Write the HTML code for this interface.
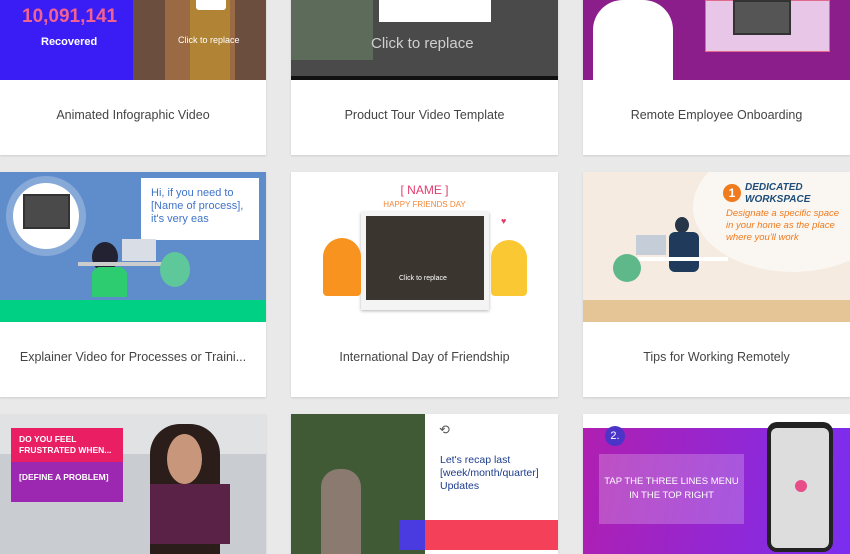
<!DOCTYPE html>
<html><head><meta charset="utf-8"><style>
*{margin:0;padding:0;box-sizing:border-box}
body{width:850px;height:531px;overflow:hidden;background:#e9e9e9;font-family:"Liberation Sans",sans-serif;position:relative}
.card{position:absolute;background:#fff;box-shadow:0 1px 2px rgba(0,0,0,.12);overflow:hidden}
.th{position:absolute;left:0;top:0;width:100%;overflow:hidden}
.cap{position:absolute;left:0;width:100%;text-align:center;font-size:12.5px;color:#444}
.a{position:absolute}
</style></head><body>
<div class="card" style="left:0;top:-70px;width:266px;height:225px">
 <div class="th" style="height:150px;background:#3a1cf4">
  <div class="a" style="left:133px;top:0;width:133px;height:150px;background:#6b4e3e"></div>
  <div class="a" style="left:165px;top:0;width:70px;height:150px;background:#9a6a44"></div>
  <div class="a" style="left:190px;top:70px;width:40px;height:80px;background:#b08434"></div>
  <div class="a" style="left:196px;top:62px;width:30px;height:18px;background:#fff;border-radius:3px"></div>
  <div class="a" style="left:178px;top:105px;color:#fff;font-size:9px">Click to replace</div>
  <div class="a" style="left:22px;top:76px;color:#f06292;font-size:19px;font-weight:bold">10,091,141</div>
  <div class="a" style="left:41px;top:106px;color:#fff;font-size:11px;font-weight:bold">Recovered</div>
 </div>
 <div class="cap" style="top:178px">Animated Infographic Video</div>
</div>
<div class="card" style="left:291px;top:-70px;width:267px;height:225px">
 <div class="th" style="height:150px;background:#4a4a4a">
  <div class="a" style="left:0;top:70px;width:82px;height:60px;background:#5d6b5a"></div>
  <div class="a" style="left:88px;top:70px;width:112px;height:22px;background:#fff"></div>
  <div class="a" style="left:0;top:146px;width:267px;height:4px;background:#111"></div>
  <div class="a" style="left:80px;top:105px;color:#cfcfcf;font-size:15px">Click to replace</div>
 </div>
 <div class="cap" style="top:178px">Product Tour Video Template</div>
</div>
<div class="card" style="left:583px;top:-70px;width:267px;height:225px">
 <div class="th" style="height:150px;background:#8b1e8a">
  <div class="a" style="left:10px;top:70px;width:80px;height:80px;background:#fff;border-radius:30px 30px 0 0"></div>
  <div class="a" style="left:122px;top:70px;width:125px;height:52px;background:#e7c6e8;border:1px solid #e06a8a"></div>
  <div class="a" style="left:150px;top:70px;width:58px;height:35px;background:#555;border:2px solid #333"></div>
 </div>
 <div class="cap" style="top:178px">Remote Employee Onboarding</div>
</div>
<div class="card" style="left:0;top:172px;width:266px;height:225px">
 <div class="th" style="height:150px;background:#5f8dcc">
  <div class="a" style="left:0;top:128px;width:266px;height:22px;background:#00d084"></div>
  <div class="a" style="left:6px;top:4px;width:80px;height:80px;border-radius:50%;background:#86a9d8"></div>
  <div class="a" style="left:13px;top:11px;width:66px;height:66px;border-radius:50%;background:#fff"></div>
  <div class="a" style="left:23px;top:22px;width:47px;height:35px;background:#4a4a4a;border:2px solid #333"></div>
  <div class="a" style="left:141px;top:6px;width:118px;height:62px;background:#fff"></div>
  <div class="a" style="left:151px;top:15px;color:#3f74c9;font-size:11px;line-height:13px">Hi, if you need to<br>[Name of process],<br>it's very eas</div>
  <div class="a" style="left:92px;top:70px;width:26px;height:30px;border-radius:50%;background:#223"></div>
  <div class="a" style="left:92px;top:95px;width:35px;height:30px;background:#2ecc71;border-radius:8px 8px 0 0"></div>
  <div class="a" style="left:122px;top:67px;width:34px;height:22px;background:#d8dde6"></div>
  <div class="a" style="left:78px;top:90px;width:105px;height:4px;background:#ccc"></div>
  <div class="a" style="left:160px;top:80px;width:30px;height:35px;background:#5fc89a;border-radius:50%"></div>
 </div>
 <div class="cap" style="top:178px">Explainer Video for Processes or Traini...</div>
</div>
<div class="card" style="left:291px;top:172px;width:267px;height:225px">
 <div class="th" style="height:150px;background:#fff">
  <div class="a" style="left:0;top:11px;width:100%;text-align:center;color:#e33c6c;font-size:12px">[ NAME ]</div>
  <div class="a" style="left:0;top:28px;width:100%;text-align:center;color:#f08a3c;font-size:8px">HAPPY FRIENDS DAY</div>
  <div class="a" style="left:70px;top:40px;width:128px;height:98px;background:#f4f4f4;box-shadow:0 1px 3px rgba(0,0,0,.3)"></div>
  <div class="a" style="left:75px;top:44px;width:118px;height:84px;background:#3b3530"></div>
  <div class="a" style="left:108px;top:103px;color:#fff;font-size:7px">Click to replace</div>
  <div class="a" style="left:32px;top:66px;width:38px;height:58px;background:#f7931e;border-radius:19px 19px 4px 4px"></div>
  <div class="a" style="left:200px;top:68px;width:36px;height:56px;background:#f9c833;border-radius:18px 18px 4px 4px"></div>
  <div class="a" style="left:210px;top:44px;color:#e33c6c;font-size:9px">♥</div>
 </div>
 <div class="cap" style="top:178px">International Day of Friendship</div>
</div>
<div class="card" style="left:583px;top:172px;width:267px;height:225px">
 <div class="th" style="height:150px;background:#f5ebe0">
  <div class="a" style="left:110px;top:-30px;width:200px;height:130px;border-radius:50%;background:#faf6f1"></div>
  <div class="a" style="left:0;top:128px;width:267px;height:22px;background:#e5c596"></div>
  <div class="a" style="left:140px;top:12px;width:18px;height:18px;border-radius:50%;background:#f07a1e;color:#fff;font-size:12px;font-weight:bold;text-align:center;line-height:18px">1</div>
  <div class="a" style="left:162px;top:10px;color:#1d4d7a;font-size:10px;font-weight:bold;font-style:italic;line-height:12px">DEDICATED<br>WORKSPACE</div>
  <div class="a" style="left:143px;top:36px;color:#f07a1e;font-size:9.5px;font-style:italic;line-height:12px">Designate a specific space<br>in your home as the place<br>where you'll work</div>
  <div class="a" style="left:92px;top:45px;width:14px;height:16px;border-radius:50%;background:#263548"></div>
  <div class="a" style="left:86px;top:60px;width:30px;height:40px;background:#1f3a5a;border-radius:6px"></div>
  <div class="a" style="left:53px;top:63px;width:30px;height:20px;background:#c5cdd8"></div>
  <div class="a" style="left:55px;top:85px;width:90px;height:4px;background:#fff"></div>
  <div class="a" style="left:30px;top:82px;width:28px;height:28px;background:#5fb88a;border-radius:50%"></div>
 </div>
 <div class="cap" style="top:178px">Tips for Working Remotely</div>
</div>
<div class="card" style="left:0;top:414px;width:266px;height:140px">
 <div class="th" style="height:140px;background:#c9ccd0">
  <div class="a" style="left:0;top:0;width:266px;height:40px;background:#e0e2e4"></div>
  <div class="a" style="left:150px;top:10px;width:70px;height:130px;background:#2b1d1a;border-radius:30px 30px 0 0"></div>
  <div class="a" style="left:150px;top:70px;width:80px;height:60px;background:#5b2248"></div>
  <div class="a" style="left:167px;top:20px;width:35px;height:50px;background:#c8967a;border-radius:50%"></div>
  <div class="a" style="left:11px;top:14px;width:112px;height:34px;background:#ea1e63;color:#fff;font-size:8.5px;font-weight:bold;padding:6px 8px;line-height:11px;white-space:nowrap">DO YOU FEEL<br>FRUSTRATED WHEN...</div>
  <div class="a" style="left:11px;top:48px;width:112px;height:40px;background:#9c27b0;color:#fff;font-size:8.5px;font-weight:bold;padding:10px 8px">[DEFINE A PROBLEM]</div>
 </div>
</div>
<div class="card" style="left:291px;top:414px;width:267px;height:140px">
 <div class="th" style="height:140px;background:#fff">
  <div class="a" style="left:0;top:0;width:134px;height:140px;background:#3f5a35"></div>
  <div class="a" style="left:30px;top:55px;width:40px;height:85px;background:#8a7a70;border-radius:18px 18px 0 0"></div>
  <div class="a" style="left:108px;top:106px;width:26px;height:30px;background:#4a3be0"></div>
  <div class="a" style="left:134px;top:106px;width:133px;height:30px;background:#f5405a"></div>
  <div class="a" style="left:148px;top:8px;color:#555;font-size:13px">⟲</div>
  <div class="a" style="left:149px;top:40px;color:#1c3c8c;font-size:10.5px;line-height:13px">Let's recap last<br>[week/month/quarter]<br>Updates</div>
 </div>
</div>
<div class="card" style="left:583px;top:414px;width:267px;height:140px">
 <div class="th" style="height:140px;background:linear-gradient(100deg,#b01fb0,#7a2ef0)">
  <div class="a" style="left:0;top:0;width:267px;height:14px;background:#fff"></div>
  <div class="a" style="left:22px;top:12px;width:20px;height:20px;border-radius:50%;background:#4a35c8;color:#fff;font-size:11px;text-align:center;line-height:20px">2.</div>
  <div class="a" style="left:16px;top:40px;width:145px;height:70px;background:rgba(255,255,255,.22);color:#fff;font-size:9.5px;text-align:center;padding-top:21px;line-height:14px">TAP THE THREE LINES MENU<br>IN THE TOP RIGHT</div>
  <div class="a" style="left:184px;top:8px;width:66px;height:130px;background:#222;border-radius:10px"></div>
  <div class="a" style="left:188px;top:14px;width:58px;height:120px;background:#ddd;border-radius:6px"></div>
  <div class="a" style="left:212px;top:66px;width:12px;height:12px;border-radius:50%;background:#e84d8a"></div>
 </div>
</div>
</body></html>
